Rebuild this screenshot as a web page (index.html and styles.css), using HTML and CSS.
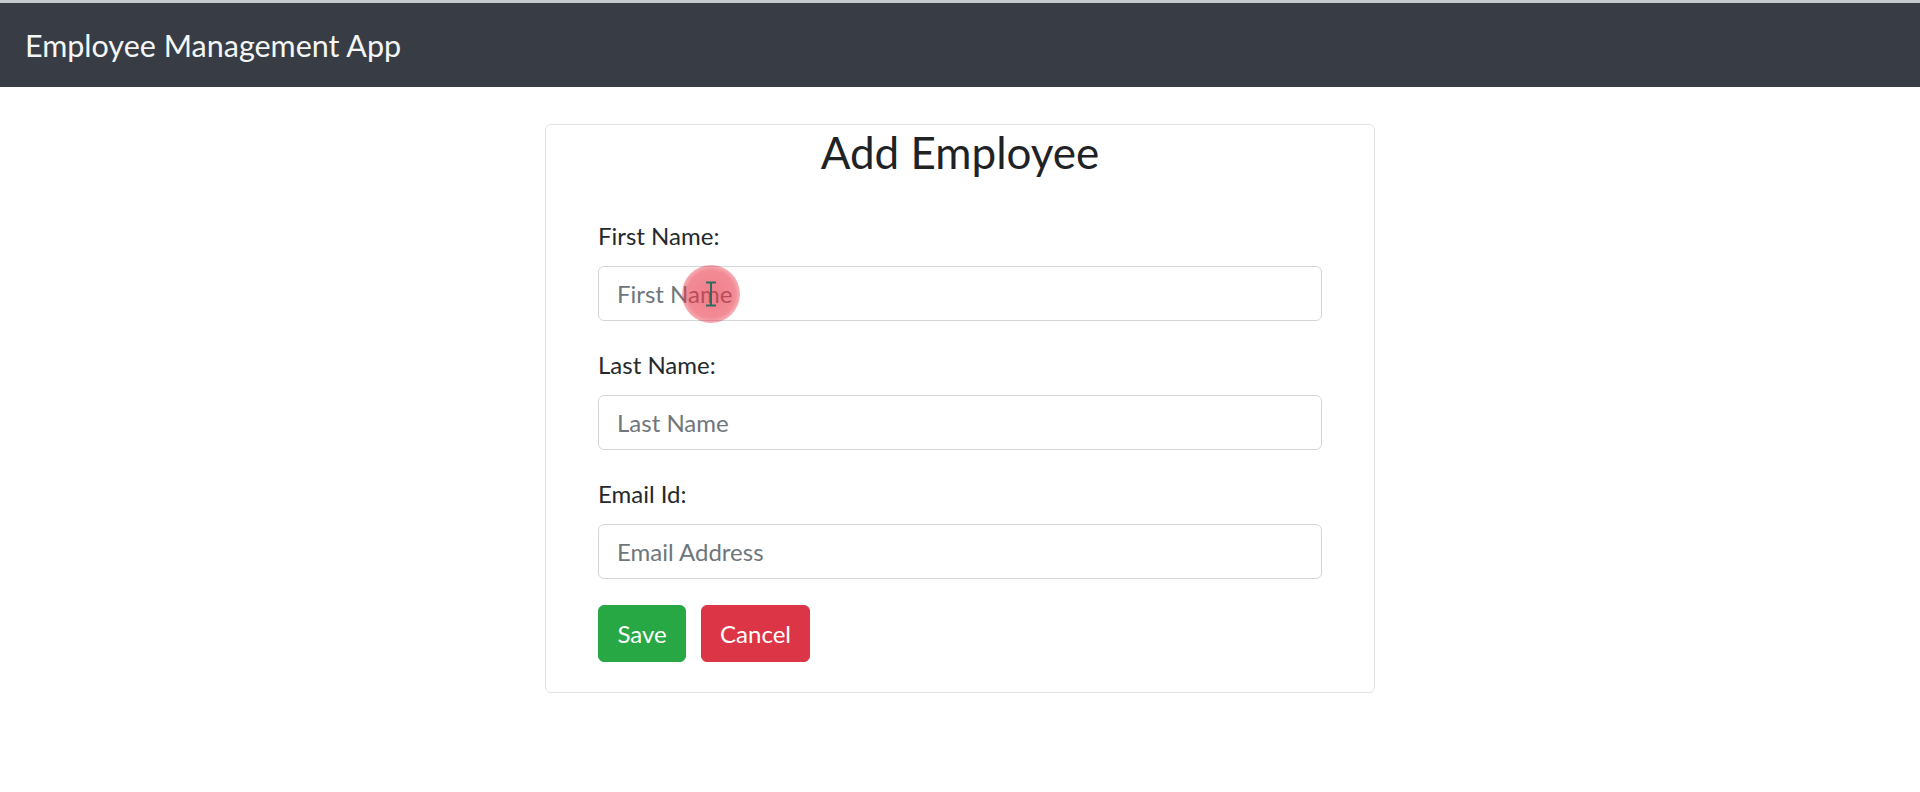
FILE: index.html
```html
<!DOCTYPE html>
<html lang="en">
<head>
<meta charset="utf-8">
<title>Employee Management App</title>
<link rel="stylesheet" href="styles.css">
</head>
<body>
<div class="topstrip"></div>
<nav class="navbar"><span class="brand">Employee Management App</span></nav>
<main class="page">
  <div class="card">
    <h3 class="card-title">Add Employee</h3>
    <div class="card-body">
      <form class="form">
        <div class="form-group">
          <label class="label">First Name:</label>
          <div class="field">
            <input class="input" type="text" placeholder="First Name">
            <span class="cursor-hl">
              <svg class="ibeam" width="12" height="26" viewBox="0 0 12 26"><path d="M1 1.5h10M1 24.5h10M6 1.5v23" fill="none" stroke="#2f6b60" stroke-width="2"/></svg>
            </span>
          </div>
        </div>
        <div class="form-group">
          <label class="label">Last Name:</label>
          <div class="field"><input class="input" type="text" placeholder="Last Name"></div>
        </div>
        <div class="form-group">
          <label class="label">Email Id:</label>
          <div class="field"><input class="input" type="text" placeholder="Email Address"></div>
        </div>
        <div class="actions">
          <button type="button" class="btn btn-success">Save</button>
          <button type="button" class="btn btn-danger">Cancel</button>
        </div>
      </form>
    </div>
  </div>
</main>
</body>
</html>
```

FILE: styles.css
```css
* { box-sizing: border-box; }
html, body { margin: 0; padding: 0; background: #fff; }
body {
  font-family: Lato, "Open Sans", "Liberation Sans", sans-serif;
  color: #212529;
  width: 1920px;
  height: 792px;
  overflow: hidden;
}
.topstrip { height: 3px; background: #c7cacd; }
.navbar {
  height: 84px;
  background: #383d45;
  display: flex;
  align-items: center;
  padding-left: 25px;
}
.brand {
  color: #f4f6f6;
  font-size: 30.5px;
  line-height: 84px;
}
.page {
  display: flex;
  justify-content: center;
  padding-top: 37px;
}
.card {
  width: 830px;
  border: 1px solid #e2e3e4;
  border-radius: 6px;
  background: #fff;
}
.card-title {
  margin: 0;
  text-align: center;
  font-size: 44px;
  font-weight: 400;
  line-height: 54px;
  color: #1f2326;
}
.card-body { padding: 39px 52px 30px 52px; }
.form { margin: 0; }
.form-group { margin-bottom: 26px; }
.label {
  display: block;
  font-size: 24px;
  line-height: 36px;
  margin-bottom: 12px;
  color: #25292c;
}
.field { position: relative; }
.input {
  display: block;
  width: 100%;
  height: 55px;
  border: 1px solid #d3d6d9;
  border-radius: 6px;
  padding: 0 18px;
  font-family: inherit;
  font-size: 24px;
  color: #495057;
  background: #fff;
  outline: none;
}
.input::placeholder { color: #6f767c; opacity: 1; }
.actions { display: flex; gap: 15px; margin-top: 3px; }
.btn {
  height: 57px;
  border: 1px solid transparent;
  border-radius: 6px;
  padding: 0 17px;
  font-family: inherit;
  font-size: 24px;
  color: #fff;
  cursor: pointer;
}
.btn-success { background: #28a745; border-color: #28a745; width: 88px; }
.btn-danger { background: #dc3545; border-color: #dc3545; width: 109px; }
.cursor-hl {
  position: absolute;
  left: 84px;
  top: -1px;
  width: 58px;
  height: 58px;
  border-radius: 50%;
  background: radial-gradient(circle, rgba(232,48,66,0.62) 0%, rgba(232,48,66,0.56) 58%, rgba(232,48,66,0) 100%);
  display: flex;
  align-items: center;
  justify-content: center;
}
.ibeam { display: block; }
```
